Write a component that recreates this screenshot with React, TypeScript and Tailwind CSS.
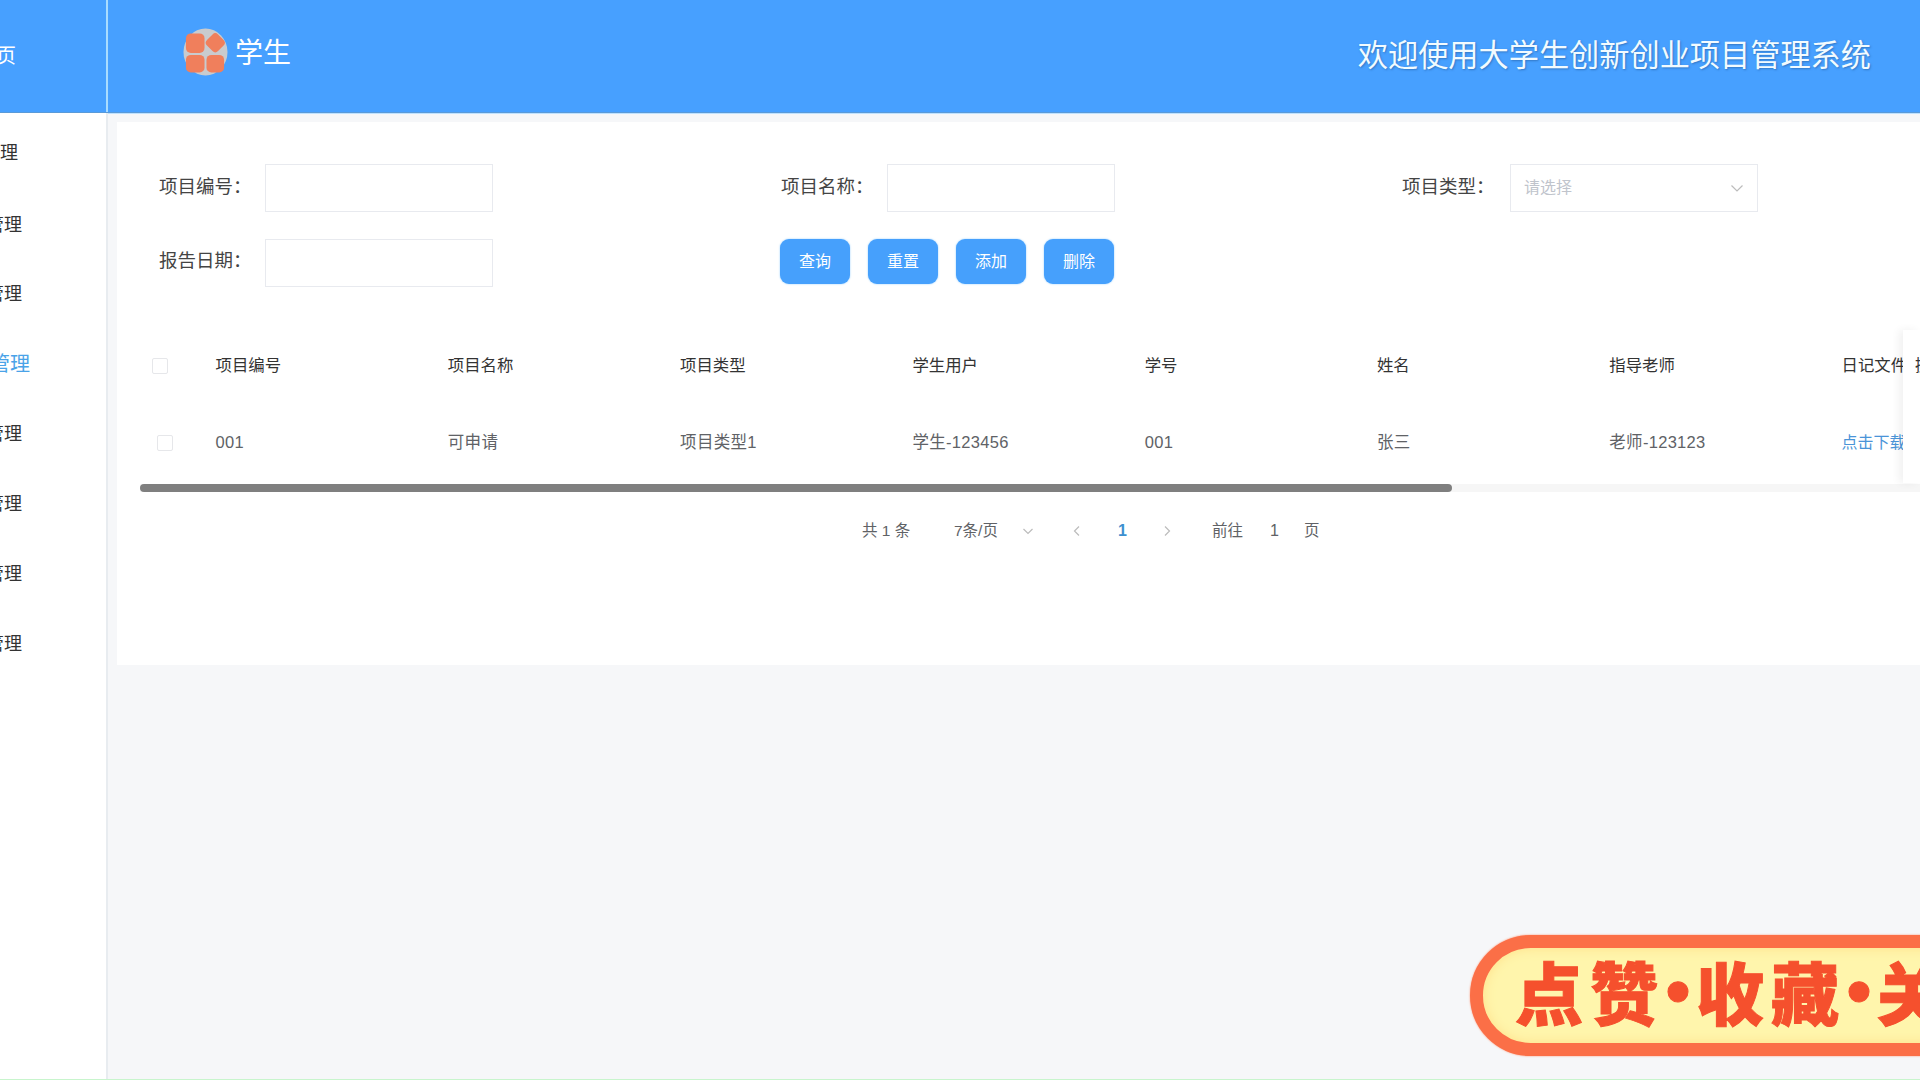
import React from "react";

const headers = ["项目编号", "项目名称", "项目类型", "学生用户", "学号", "姓名", "指导老师", "日记文件"];
const cells = ["001", "可申请", "项目类型1", "学生-123456", "001", "张三", "老师-123123"];
const side = [
  { t: "理", pr: "pr-[88px]", h: "h-[73px]" },
  { t: "管理", pr: "pr-[84px]", h: "h-[70px]" },
  { t: "管理", pr: "pr-[84px]", h: "h-[69px]" },
  { t: "管理", pr: "pr-[76px]", h: "h-[70px]", active: true },
  { t: "管理", pr: "pr-[84px]", h: "h-[70px]" },
  { t: "管理", pr: "pr-[84px]", h: "h-[70px]" },
  { t: "管理", pr: "pr-[84px]", h: "h-[70px]" },
  { t: "管理", pr: "pr-[84px]", h: "h-[70px]" },
];

function Field({ label, w, lift = "-mt-[2px]", children }: { label: string; w: string; lift?: string; children?: React.ReactNode }) {
  return (
    <div className="flex items-center h-[48px]">
      <div className={`${w} text-[18.5px] text-[#444] ${lift} whitespace-nowrap`}>{label}</div>
      {children}
    </div>
  );
}

function Box() {
  return <div className="w-[228px] h-[48px] border-[1.5px] border-[#e8eaef] bg-white" />;
}

function Btn({ t }: { t: string }) {
  return (
    <button className="w-[70px] h-[45px] rounded-[9px] bg-[#46a0fc] text-white text-[16px] shadow-[0_0_2px_#8ccaff]">{t}</button>
  );
}

function Check({ ml }: { ml: string }) {
  return <div className={`${ml} w-[16px] h-[16px] rounded-[2px] border-[1.5px] border-[#e6e7ea] bg-white`} />;
}

function Chevron({ d, size = 14, color = "#bcbcbc" }: { d: string; size?: number; color?: string }) {
  return (
    <svg width={size} height={size} viewBox="0 0 14 14" fill="none" stroke={color} strokeWidth="1.2">
      <path d={d} />
    </svg>
  );
}

export default function App() {
  return (
    <div className="relative w-[1920px] h-[1080px] overflow-hidden flex flex-col bg-[#f6f7f9] text-[#606266] font-['Liberation_Sans','Noto_Sans_CJK_SC',sans-serif]">
      <header className="flex h-[113px] shrink-0 bg-[#47a0ff] border-b border-[#5a9ad8] shadow-[0_1px_0_#bfe2ff]">
        <div className="w-[108px] shrink-0 border-r-2 border-[#a9dcff] flex items-center justify-end pr-[90px]">
          <span className="text-[20px] text-white whitespace-nowrap">首页</span>
        </div>
        <div className="flex-1 flex items-center pl-[75px] pr-[49px]">
          <svg width="45" height="48" viewBox="0 0 46 48" className="-mt-[8px] shrink-0">
            <ellipse cx="23" cy="24" rx="22.5" ry="24" fill="#c9cbce" />
            <rect x="3" y="5" width="19" height="20" rx="5" fill="#f07f5c" />
            <rect x="3" y="27" width="19" height="18" rx="5" fill="#f07f5c" />
            <rect x="24" y="27" width="18" height="18" rx="5" fill="#f07f5c" />
            <rect x="25" y="6.5" width="16" height="16" rx="4" fill="#f07f5c" transform="rotate(45 33 14.5)" />
          </svg>
          <span className="ml-[7px] text-[28px] text-white -mt-[5px]">学生</span>
          <span className="ml-auto text-[30.2px] text-[#f2fbff] -mt-[1px] [text-shadow:1px_1px_2px_rgba(30,80,140,0.5)] whitespace-nowrap">欢迎使用大学生创新创业项目管理系统</span>
        </div>
      </header>

      <div className="flex flex-1 min-h-0">
        <aside className="w-[108px] shrink-0 bg-white border-r-2 border-[#e8ecf0] overflow-hidden pt-[4px]">
          {side.map((s, i) => (
            <div key={i} className={`${s.h} flex items-center justify-end ${s.pr}`}>
              <span className={`whitespace-nowrap ${s.active ? "text-[20px] text-[#4aa3e8]" : "text-[18px] text-[#333]"}`}>{s.t}</span>
            </div>
          ))}
        </aside>

        <main className="flex-1 min-w-0 pl-[9px] pt-[9px]">
          <section className="h-[543px] bg-white pt-[42px] overflow-hidden">
            <div className="pl-[42px] grid grid-cols-[622px_621px_1fr] gap-y-[27px]">
              <Field label="项目编号：" w="w-[106px]"><Box /></Field>
              <Field label="项目名称：" w="w-[106px]"><Box /></Field>
              <Field label="项目类型：" w="w-[108px]">
                <div className="w-[248px] h-[48px] border-[1.5px] border-[#e8eaef] flex items-center justify-between pl-[13px] pr-[13px] text-[16px] text-[#c0c4cc]">
                  <span>请选择</span>
                  <Chevron d="M1.5 4.5 7 10l5.5-5.5" />
                </div>
              </Field>
              <Field label="报告日期：" w="w-[106px]" lift="-mt-[4px]"><Box /></Field>
              <div className="flex gap-[18px] -ml-[1px]">
                <Btn t="查询" />
                <Btn t="重置" />
                <Btn t="添加" />
                <Btn t="删除" />
              </div>
            </div>

            <div className="mt-[40px] ml-[23px] overflow-hidden">
              <div className="grid grid-cols-[75.5px_repeat(8,232.3px)] items-center h-[77px] text-[16.4px] text-[#333]">
                <Check ml="ml-[12px]" />
                {headers.map((h) => (
                  <div key={h} className="whitespace-nowrap">{h}</div>
                ))}
              </div>
              <div className="grid grid-cols-[75.5px_repeat(8,232.3px)] items-center h-[80px] pb-[3px] text-[16.5px] tracking-[0.3px] text-[#606266]">
                <Check ml="ml-[17px]" />
                {cells.map((c, i) => (
                  <div key={i} className="whitespace-nowrap">{c}</div>
                ))}
                <div className="whitespace-nowrap text-[#4a94d8] tracking-normal text-[16px]">点击下载</div>
              </div>
              <div className="h-[8px] bg-[#f6f6f6]">
                <div className="w-[1312px] h-[8px] rounded-full bg-[#7f7f7f]" />
              </div>
            </div>

            <div className="mt-[24px] ml-[745px] h-[30px] flex items-center text-[15.5px] text-[#606266] whitespace-nowrap">
              <span className="w-[92px]">共 1 条</span>
              <span className="w-[67px]">7条/页</span>
              <span className="w-[49px] flex"><Chevron d="M2.5 5 7 9.5 11.5 5" size={14} /></span>
              <span className="w-[48px] flex"><Chevron d="M9 2.5 4.5 7 9 11.5" size={14} /></span>
              <span className="w-[42px] font-bold text-[16px] text-[#3c8fd0]">1</span>
              <span className="w-[52px] flex"><Chevron d="M5 2.5 9.5 7 5 11.5" size={14} /></span>
              <span className="w-[58px]">前往</span>
              <span className="w-[34px] text-[16px]">1</span>
              <span>页</span>
            </div>
          </section>
        </main>
      </div>

      <div className="h-[1px] shrink-0 bg-[#c8f5cd]" />

      <div className="absolute left-[1903px] top-[330px] w-[17px] h-[153px] bg-white shadow-[-4px_0_8px_rgba(0,0,0,0.06)] overflow-hidden">
        <span className="absolute left-[12px] top-[24px] text-[16px] text-[#333] whitespace-nowrap">操作</span>
      </div>

      <div className="absolute left-[1470px] top-[935px] w-[520px] h-[121px] rounded-full border-[13px] border-[#fb6f47] bg-[#fff5ac] shadow-[inset_0_0_12px_#ffe08a,0_0_2px_#ff8a66] flex items-center pl-[32px] overflow-hidden">
        <div className="-mt-[10px] flex items-center whitespace-nowrap font-black text-[#f5502d] leading-none font-['Noto_Sans_CJK_SC',sans-serif] text-[68px] tracking-[7px] [-webkit-text-stroke:1px_#f5502d]">
          <span>点赞</span>
          <span className="w-[28px] -ml-[1px] text-center font-['Liberation_Sans'] text-[70px] tracking-normal">•</span>
          <span className="ml-[4px]">收藏</span>
          <span className="w-[28px] -ml-[1px] text-center font-['Liberation_Sans'] text-[70px] tracking-normal">•</span>
          <span className="ml-[4px]">关注</span>
        </div>
      </div>
    </div>
  );
}
